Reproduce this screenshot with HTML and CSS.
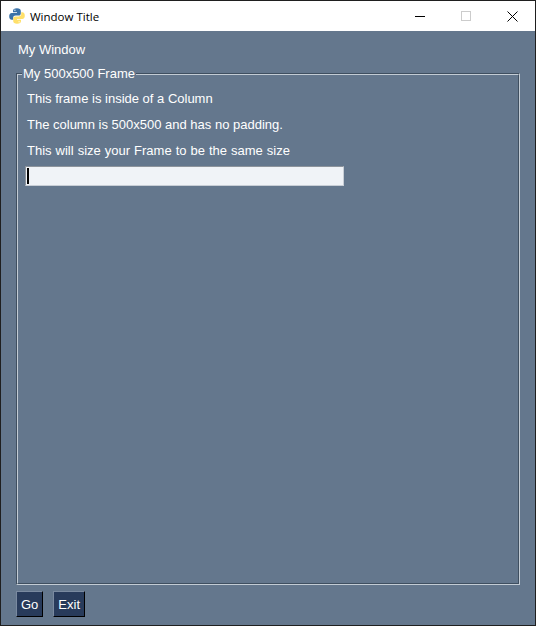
FILE: index.html
```html
<!DOCTYPE html>
<html lang="en">
<head>
    <meta charset="UTF-8">
    <meta name="viewport" content="width=device-width, initial-scale=1.0">
    <title>Window Title</title>
    <link rel="stylesheet" href="styles.css">
</head>
<body>
    <div class="window">
        <div class="titlebar">
            <svg class="app-icon" viewBox="0 0 16 16" width="16" height="16">
                <path fill="#3a72a8" d="M8 0.3C5.2 0.3 4 1.3 4 3V4.2H8V5H2.8C1 5 0.2 6.4 0.2 8.3C0.2 10.4 1 11.8 2.8 11.8H4.2V9.8C4.2 8.4 5.2 7.6 6.6 7.6H9.6C10.9 7.6 11.8 6.7 11.8 5.5V3C11.8 1.3 10.4 0.3 8 0.3Z"/>
                <path fill="#ffe06a" d="M8 15.7C10.8 15.7 12 14.7 12 13V11.8H8V11H13.2C15 11 15.8 9.6 15.8 7.7C15.8 5.6 15 4.2 13.2 4.2H12.2V6.2C12.2 7.6 10.8 8.4 9.4 8.4H6.4C5.1 8.4 4.2 9.3 4.2 10.5V13C4.2 14.7 5.6 15.7 8 15.7Z"/>
                <circle cx="5.9" cy="2.3" r="0.8" fill="#d5e3ef"/>
                <circle cx="10.1" cy="13.7" r="0.8" fill="#fff6cf"/>
            </svg>
            <span class="title-text">Window Title</span>
            <div class="controls">
                <div class="control"><div class="min-icon"></div></div>
                <div class="control"><div class="max-icon"></div></div>
                <div class="control">
                    <svg viewBox="0 0 11 11" width="11" height="11">
                        <path d="M0.5 0.5L10.5 10.5M10.5 0.5L0.5 10.5" stroke="#000" stroke-width="1" fill="none"/>
                    </svg>
                </div>
            </div>
        </div>

        <div class="content">
            <div class="heading">My Window</div>

            <div class="frame">
                <div class="frame-inner">
                    <div class="legend">My 500x500 Frame</div>
                    <p>This frame is inside of a Column</p>
                    <p>The column is 500x500 and has no padding.</p>
                    <p class="wide">This will size your Frame to be the same size</p>
                    <div class="text-input"><div class="caret"></div></div>
                </div>
            </div>

            <div class="buttons">
                <button>Go</button>
                <button>Exit</button>
            </div>
        </div>
    </div>
</body>
</html>
```

FILE: styles.css
```css
* {
    margin: 0;
    padding: 0;
    box-sizing: border-box;
}

body {
    overflow: hidden;
    background: #64778d;
    color: #fff;
    font-family: "Liberation Sans", Arial, sans-serif;
    font-size: 13px;
}

.window {
    display: flex;
    flex-direction: column;
    width: 536px;
    height: 626px;
    border: 1px solid #1f1f1f;
}

.titlebar {
    display: flex;
    align-items: center;
    height: 30px;
    padding-left: 8px;
    background: #fff;
    color: #000;
}

.app-icon {
    margin-right: 5px;
}

.title-text {
    flex: 1;
    font-family: "Open Sans", sans-serif;
    font-size: 11.5px;
}

.controls {
    display: flex;
    height: 100%;
}

.control {
    display: flex;
    align-items: center;
    justify-content: center;
    width: 46px;
    height: 100%;
}

.min-icon {
    width: 10px;
    height: 1px;
    background: #000;
}

.max-icon {
    width: 10px;
    height: 10px;
    border: 1px solid #ccc;
}

.content {
    flex: 1;
    display: flex;
    flex-direction: column;
    padding: 0 15px;
}

.heading {
    height: 42px;
    padding: 11px 0 0 2px;
    line-height: 16px;
}

.frame {
    height: 512px;
    border: 1px solid;
    border-color: #3f4f60 #c3ccd5 #c3ccd5 #3f4f60;
}

.frame-inner {
    position: relative;
    height: 100%;
    padding: 11px 7px 0;
    border: 1px solid;
    border-color: #c3ccd5 #3f4f60 #3f4f60 #c3ccd5;
}

.legend {
    position: absolute;
    top: -8px;
    left: 4px;
    padding: 0 1px;
    background: #64778d;
    line-height: 14px;
}

.frame p {
    height: 26px;
    padding: 5px 0 0 2px;
    line-height: 16px;
}

.frame p.wide {
    word-spacing: 0.4px;
}

.text-input {
    width: 319px;
    height: 20px;
    margin-top: 2px;
    padding: 1px 0 1px 1px;
    background: #f0f3f7;
    border: 1px solid;
    border-color: #8d949c #c8ced6 #c8ced6 #8d949c;
}

.caret {
    width: 2px;
    height: 100%;
    background: #000;
}

.buttons {
    display: flex;
    gap: 10px;
    margin-top: 6px;
}

button {
    height: 26px;
    padding: 0 4px;
    background: #283b5b;
    color: #fff;
    font: inherit;
    border: 1px solid;
    border-color: #7a8aa0 #000 #000 #7a8aa0;
}
```
